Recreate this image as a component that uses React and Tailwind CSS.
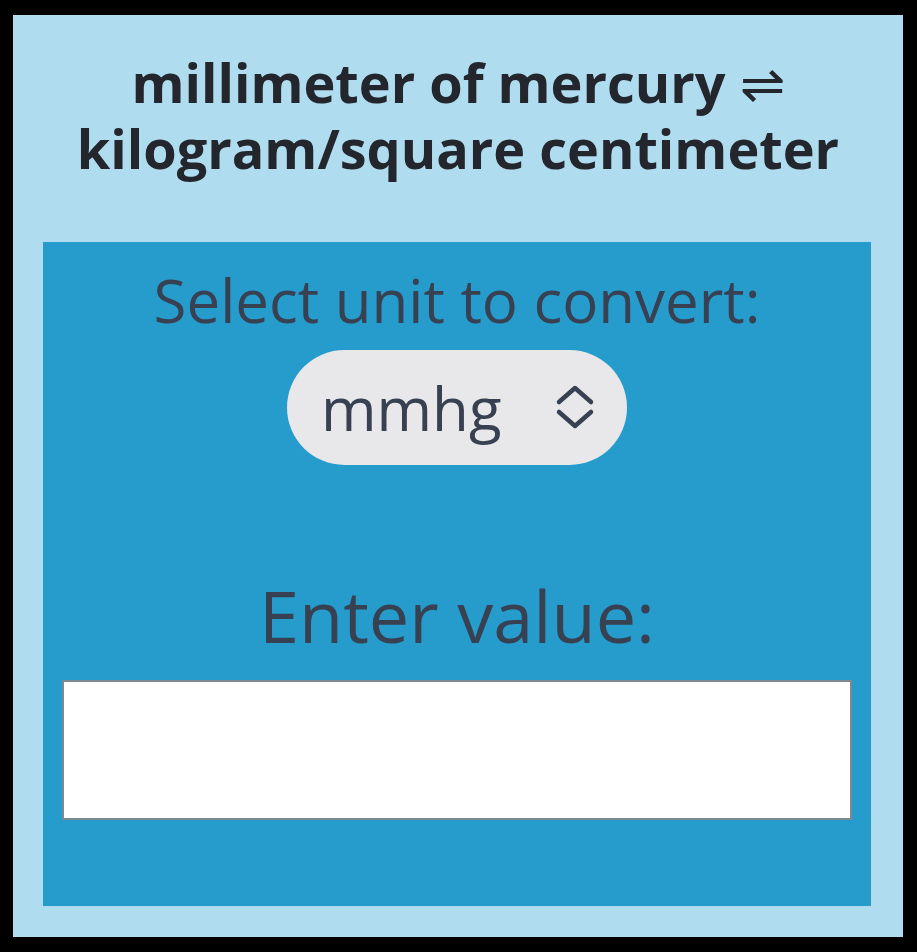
import React, { useState } from "react";

const UNITS = ["mmhg", "kgcm2"];

const ChevronsIcon = () => (
  <svg width="40" height="48" viewBox="0 0 40 48" fill="none" stroke="#374151" strokeWidth="4.5" strokeLinecap="round" strokeLinejoin="round">
    <path d="M4 19 L20 5 L36 19" />
    <path d="M4 29 L20 43 L36 29" />
  </svg>
);

export default function App() {
  const [unit, setUnit] = useState("mmhg");
  const [value, setValue] = useState("");

  return (
    <div className="min-h-screen bg-black pl-[13px] pt-[15px]" style={{ fontFamily: "'Open Sans', 'Noto Sans', sans-serif" }}>
      <div className="w-[890px] h-[922px] bg-[#afdcef] px-[30px] pt-[34px]">
        {/* titel */}
        <h1 className="h-[132px] text-center text-[54px] leading-[66px] font-bold text-[#23262d]">
          millimeter of mercury{" "}
          <span className="font-extralight text-[54px] leading-none" style={{ fontFamily: "'DejaVu Sans', sans-serif" }}>
            ⇌
          </span>
          <br />
          kilogram/square centimeter
        </h1>

        <div className="mt-[61px] w-[828px] h-[664px] bg-[#269ccd] px-[19px] pt-[23px] flex flex-col items-center">
          <p className="text-[60px] leading-[70px] text-[#374151]">Select unit to convert:</p>

          <div className="relative mt-[15px] w-[340px] h-[115px] rounded-[58px] bg-[#e8e8ea] flex items-center">
            <select
              value={unit}
              onChange={(e) => setUnit(e.target.value)}
              className="appearance-none bg-transparent w-full h-full pl-[34px] text-[60px] text-[#374151] outline-none"
            >
              {UNITS.map((u) => (
                <option key={u} value={u}>
                  {u}
                </option>
              ))}
            </select>
            <div className="absolute right-[32px] top-[33px] pointer-events-none">
              <ChevronsIcon />
            </div>
          </div>

          <p className="mt-[107px] text-[72px] leading-[86px] text-[#374151]">Enter value:</p>

          <input
            type="text"
            value={value}
            onChange={(e) => setValue(e.target.value)}
            className="mt-[22px] w-full h-[140px] bg-white border-2 border-[#7d8a94] outline-none px-4 text-[40px]"
          />
        </div>
      </div>
    </div>
  );
}
